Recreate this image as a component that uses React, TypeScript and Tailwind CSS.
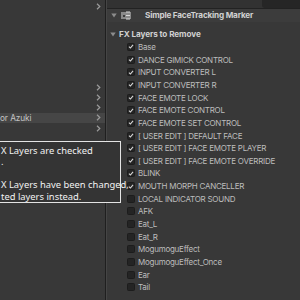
import React from "react";

const items: [string, boolean][] = [
  ["Base", true],
  ["DANCE GIMICK CONTROL", true],
  ["INPUT CONVERTER L", true],
  ["INPUT CONVERTER R", true],
  ["FACE EMOTE LOCK", true],
  ["FACE EMOTE CONTROL", true],
  ["FACE EMOTE SET CONTROL", true],
  ["[ USER EDIT ] DEFAULT FACE", true],
  ["[ USER EDIT ] FACE EMOTE PLAYER", true],
  ["[ USER EDIT ] FACE EMOTE OVERRIDE", true],
  ["BLINK", true],
  ["MOUTH MORPH CANCELLER", true],
  ["LOCAL INDICATOR SOUND", false],
  ["AFK", false],
  ["Eat_L", false],
  ["Eat_R", false],
  ["MogumoguEffect", false],
  ["MogumoguEffect_Once", false],
  ["Ear", false],
  ["Tail", false],
];

function Chevron() {
  return (
    <svg width="5" height="7" viewBox="0 0 5 7" className="shrink-0">
      <path d="M1 0.8 L3.8 3.5 L1 6.2" fill="none" stroke="#9a9a9a" strokeWidth="1.2" />
    </svg>
  );
}

function Fold() {
  return (
    <svg width="6" height="5" viewBox="0 0 6 5" className="shrink-0">
      <path d="M0.3 0.5 L5.7 0.5 L3 4.6 Z" fill="#8c8c8c" />
    </svg>
  );
}

function LeftRow({ highlight, text }: { highlight?: boolean; text?: string }) {
  return (
    <div
      className={
        "h-[10.2px] flex items-center justify-between pr-[4px] " +
        (highlight ? "bg-[#464646]" : "")
      }
    >
      <span className="text-[8.3px] tracking-[-0.1px] leading-none text-[#c4c4c4] whitespace-nowrap">{text ?? ""}</span>
      <Chevron />
    </div>
  );
}

function Check({ on }: { on: boolean }) {
  return (
    <div className="w-[8px] h-[8px] rounded-[1.5px] bg-[#242424] border border-[#1c1c1c] flex items-center justify-center shrink-0">
      {on && (
        <svg width="7" height="7" viewBox="0 0 7 7">
          <path d="M1.1 3.7 L2.8 5.3 L5.9 1.6" fill="none" stroke="#d8d8d8" strokeWidth="1.3" />
        </svg>
      )}
    </div>
  );
}

export default function App() {
  return (
    <div
      className="relative w-[300px] h-[300px] overflow-hidden bg-[#383838] flex"
      style={{ fontFamily: "Inter, 'Liberation Sans', sans-serif" }}
    >
      {/* Left panel */}
      <div className="w-[105px] shrink-0 flex flex-col">
        <div className="pt-[1px]">
          <LeftRow />
        </div>
        <div className="h-[71px]" />
        <LeftRow />
        <LeftRow />
        <LeftRow />
        <LeftRow highlight text="or Azuki" />
        <LeftRow />
      </div>
      {/* separator */}
      <div className="w-[1px] shrink-0 bg-[#1f1f1f]" />
      <div className="w-[1px] shrink-0 bg-[#454545]" />
      {/* Right panel */}
      <div className="flex-1 flex flex-col min-w-0">
        <div className="h-[9px] bg-[#323232] border-b border-[#222] flex justify-end shrink-0">
          <div className="w-[38px] h-[8px] bg-[#262626] rounded-bl-[3px]" />
        </div>
        <div className="h-[13px] flex items-center bg-[#3c3c3c] pl-[4px] shrink-0">
          <Fold />
          <svg width="10" height="9" viewBox="0 0 10 9" className="ml-[4px] shrink-0">
            <path d="M1 1 V8 M3 1 V4 M3 6 V8 M5 1 H9 V8 H5 Z M5 4.5 H9 M7 1 V8" fill="none" stroke="#d8d8d8" strokeWidth="1" />
          </svg>
          <span className="ml-[14px] text-[8.2px] tracking-[-0.2px] font-bold leading-none text-[#d0d0d0] whitespace-nowrap">
            Simple FaceTracking Marker
          </span>
        </div>
        <div className="h-[6px] shrink-0" />
        <div className="h-[12.6px] flex items-center pl-[3px] shrink-0">
          <Fold />
          <span className="ml-[3px] text-[8.2px] tracking-[-0.1px] font-bold leading-none text-[#d0d0d0] whitespace-nowrap">
            FX Layers to Remove
          </span>
        </div>
        {items.map(([t, on]) => (
          <div key={t} className="h-[12.67px] flex items-center pl-[20px] shrink-0">
            <Check on={on} />
            <span className="ml-[3px] text-[8px] tracking-[-0.25px] leading-none text-[#bdbdbd] whitespace-nowrap">{t}</span>
          </div>
        ))}
      </div>
      {/* Tooltip overlay */}
      <div
        className="absolute left-[-6px] top-[141px] w-[127px] h-[62px] border-[1.5px] border-[#e4e4e4] bg-[#343434] pl-[6px] pt-[2.5px] text-[9.4px] leading-[11.6px] text-[#f2f2f2] whitespace-nowrap"
        style={{ fontFamily: "'Noto Sans', 'Open Sans', sans-serif" }}
      >
        <div>X Layers are checked</div>
        <div>.</div>
        <div>&nbsp;</div>
        <div>X Layers have been changed,</div>
        <div>ted layers instead.</div>
      </div>
    </div>
  );
}
